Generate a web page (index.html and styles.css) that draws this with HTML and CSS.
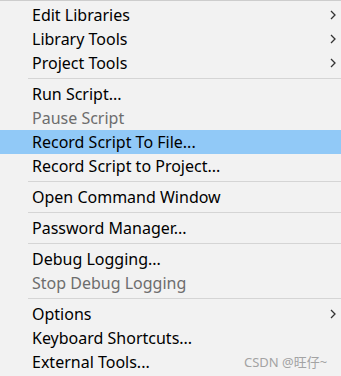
FILE: index.html
```html
<!DOCTYPE html>
<html lang="en">
<head>
    <meta charset="UTF-8">
    <meta name="viewport" content="width=device-width, initial-scale=1.0">
    <title>Tools Menu</title>
    <link rel="stylesheet" href="styles.css">
</head>
<body>
    <div class="menu">
        <div class="item">Edit Libraries<svg class="arrow" width="6" height="10" viewBox="0 0 6 10"><polyline points="1,1 5,5 1,9" fill="none" stroke="#333" stroke-width="1.3"/></svg></div>
        <div class="item">Library Tools<svg class="arrow" width="6" height="10" viewBox="0 0 6 10"><polyline points="1,1 5,5 1,9" fill="none" stroke="#333" stroke-width="1.3"/></svg></div>
        <div class="item">Project Tools<svg class="arrow" width="6" height="10" viewBox="0 0 6 10"><polyline points="1,1 5,5 1,9" fill="none" stroke="#333" stroke-width="1.3"/></svg></div>
        <div class="sep"></div>
        <div class="item">Run Script...</div>
        <div class="item disabled">Pause Script</div>
        <div class="item active">Record Script To File...</div>
        <div class="item">Record Script to Project...</div>
        <div class="sep"></div>
        <div class="item">Open Command Window</div>
        <div class="sep"></div>
        <div class="item">Password Manager...</div>
        <div class="sep"></div>
        <div class="item">Debug Logging...</div>
        <div class="item disabled">Stop Debug Logging</div>
        <div class="sep"></div>
        <div class="item">Options<svg class="arrow" width="6" height="10" viewBox="0 0 6 10"><polyline points="1,1 5,5 1,9" fill="none" stroke="#333" stroke-width="1.3"/></svg></div>
        <div class="item">Keyboard Shortcuts...</div>
        <div class="item">External Tools...<span class="mark">CSDN @旺仔~</span></div>
    </div>
</body>
</html>
```

FILE: styles.css
```css
body {
    margin: 0;
    background-color: #f2f2f2;
    font-family: 'Noto Sans', 'Noto Sans CJK SC', sans-serif;
}

.menu {
    width: 341px;
    height: 376px;
    box-sizing: border-box;
    border-top: 1px solid #cdcdcd;
    padding-top: 2px;
    overflow: hidden;
}

.item {
    height: 24px;
    line-height: 24px;
    padding-left: 32px;
    font-size: 16px;
    color: #000;
    display: flex;
    align-items: center;
    position: relative;
}

.item.disabled {
    color: #6d6d6d;
}

.item.active {
    background-color: #91c9f7;
}

.arrow {
    position: absolute;
    left: 330px;
    top: 7px;
}

.sep {
    height: 1px;
    margin: 3px 0 3px 28px;
    background-color: #d5d5d5;
}

.mark {
    position: absolute;
    left: 244px;
    font-size: 13px;
    color: #a3a3a3;
}
```
